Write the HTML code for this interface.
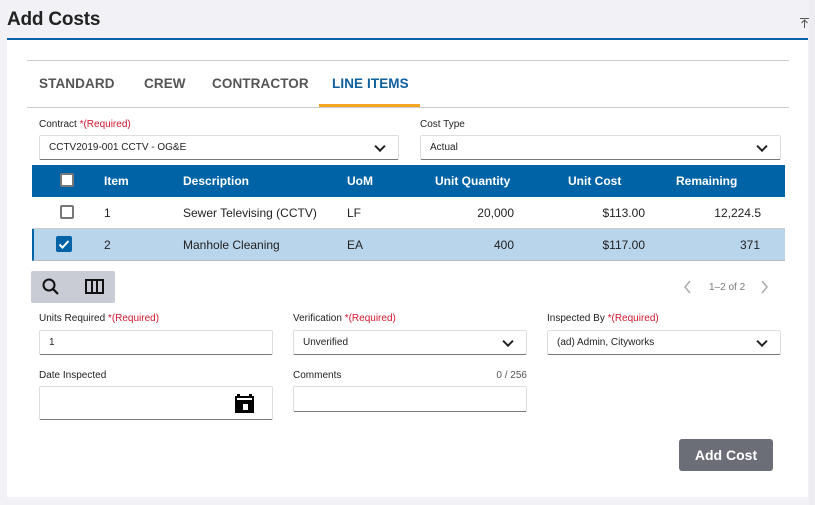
<!DOCTYPE html>
<html><head><style>
*{box-sizing:border-box;margin:0;padding:0}
body{width:815px;height:505px;background:#f1f1f6;font-family:"Liberation Sans",sans-serif;position:relative;overflow:hidden;color:#222}
.a{position:absolute}
.panel{left:7px;top:38px;width:801px;height:459px;background:#fff;border-top:2px solid #0a62a8}
.tab{top:76px;font-size:13.5px;font-weight:bold;color:#555;letter-spacing:.1px}
.lbl{font-size:10px;color:#222}
.req{color:#d3162d}
.inp{background:#fff;border:1px solid #ddd;border-bottom:1px solid #777;border-radius:2px;font-size:10px;padding-left:9px;display:flex;align-items:center}
.chev{position:absolute;right:14px;top:50%;width:8px;height:8px;border-right:2px solid #222;border-bottom:2px solid #222;transform:translateY(-70%) rotate(45deg)}
.th{top:165px;height:32px;left:32px;width:753px;background:#0063a6}
.h{font-size:12px;font-weight:bold;color:#fff;top:174px}
.c{font-size:12px;color:#222}
.cb{width:14px;height:14px;border:2px solid #777;border-radius:2px;background:#fff}
</style></head><body>
<div class="a" style="left:7px;top:9px;font-size:19px;color:#222;font-weight:bold;letter-spacing:-.2px">Add Costs</div>
<div class="a" style="left:800px;top:18px;width:9px;border-top:1px solid #555"></div>
<svg class="a" style="left:800px;top:19px" width="9" height="10"><path d="M4.5 9V1M1.5 4l3-3 3 3" stroke="#555" stroke-width="1" fill="none"/></svg>
<div class="a" style="left:809px;top:0;width:6px;height:505px;background:#ececf1"></div>
<div class="a panel"></div>
<div class="a" style="left:27px;top:60px;width:762px;border-top:1px solid #ccc"></div>
<div class="a" style="left:27px;top:107px;width:762px;border-top:1px solid #ccc"></div>
<div class="a tab" style="left:39px">STANDARD</div>
<div class="a tab" style="left:144px">CREW</div>
<div class="a tab" style="left:212px">CONTRACTOR</div>
<div class="a tab" style="left:332px;color:#0d5f9e">LINE ITEMS</div>
<div class="a" style="left:319px;top:104px;width:101px;height:3px;background:#f5a623"></div>

<div class="a lbl" style="left:39px;top:119px">Contract <span class="req">*(Required)</span></div>
<div class="a inp" style="left:39px;top:135px;width:360px;height:25px">CCTV2019-001 CCTV - OG&amp;E<span class="chev"></span></div>
<div class="a lbl" style="left:420px;top:119px">Cost Type</div>
<div class="a inp" style="left:420px;top:135px;width:361px;height:25px">Actual<span class="chev"></span></div>

<div class="a th"></div>
<div class="a cb" style="left:60px;top:173px"></div>
<div class="a h" style="left:104px">Item</div>
<div class="a h" style="left:183px">Description</div>
<div class="a h" style="left:347px">UoM</div>
<div class="a h" style="left:435px">Unit Quantity</div>
<div class="a h" style="left:568px">Unit Cost</div>
<div class="a h" style="left:676px">Remaining</div>

<div class="a" style="left:32px;top:228px;width:753px;border-top:1px solid #ccc"></div>
<div class="a cb" style="left:60px;top:205px"></div>
<div class="a c" style="left:104px;top:206px">1</div>
<div class="a c" style="left:183px;top:206px">Sewer Televising (CCTV)</div>
<div class="a c" style="left:347px;top:206px">LF</div>
<div class="a c" style="left:400px;top:206px;width:114px;text-align:right">20,000</div>
<div class="a c" style="left:520px;top:206px;width:125px;text-align:right">$113.00</div>
<div class="a c" style="left:650px;top:206px;width:111px;text-align:right">12,224.5</div>

<div class="a" style="left:32px;top:229px;width:753px;height:32px;background:#b9d5ec;border-left:2px solid #0063a6;border-bottom:1px solid #bbb"></div>
<div class="a" style="left:56px;top:236px;width:16px;height:16px;background:#0063a6;border-radius:2px"><svg width="16" height="16"><path d="M3.5 8.5l3 3 6-6.5" stroke="#fff" stroke-width="2" fill="none"/></svg></div>
<div class="a c" style="left:104px;top:238px">2</div>
<div class="a c" style="left:183px;top:238px">Manhole Cleaning</div>
<div class="a c" style="left:347px;top:238px">EA</div>
<div class="a c" style="left:400px;top:238px;width:114px;text-align:right">400</div>
<div class="a c" style="left:520px;top:238px;width:125px;text-align:right">$117.00</div>
<div class="a c" style="left:650px;top:238px;width:110px;text-align:right">371</div>

<div class="a" style="left:31px;top:271px;width:84px;height:32px;background:#c9ccd5;border-radius:2px"></div>
<svg class="a" style="left:41px;top:277px" width="20" height="20"><circle cx="8" cy="8" r="5.5" stroke="#111" stroke-width="2" fill="none"/><path d="M12 12l5 5" stroke="#111" stroke-width="2.2"/></svg>
<svg class="a" style="left:85px;top:279px" width="20" height="16"><rect x="1" y="1" width="17" height="13" stroke="#111" stroke-width="2" fill="none"/><path d="M7 1v13M12 1v13" stroke="#111" stroke-width="2"/></svg>
<svg class="a" style="left:683px;top:280px" width="10" height="14"><path d="M7 1L2 7l5 6" stroke="#aaa" stroke-width="1.5" fill="none"/></svg>
<div class="a" style="left:709px;top:282px;font-size:10px;color:#777">1–2 of 2</div>
<svg class="a" style="left:760px;top:280px" width="10" height="14"><path d="M2 1l5 6-5 6" stroke="#aaa" stroke-width="1.5" fill="none"/></svg>

<div class="a lbl" style="left:39px;top:313px">Units Required <span class="req">*(Required)</span></div>
<div class="a inp" style="left:39px;top:330px;width:234px;height:25px">1</div>
<div class="a lbl" style="left:293px;top:313px">Verification <span class="req">*(Required)</span></div>
<div class="a inp" style="left:293px;top:330px;width:234px;height:25px">Unverified<span class="chev"></span></div>
<div class="a lbl" style="left:547px;top:313px">Inspected By <span class="req">*(Required)</span></div>
<div class="a inp" style="left:547px;top:330px;width:234px;height:25px">(ad) Admin, Cityworks<span class="chev"></span></div>

<div class="a lbl" style="left:39px;top:370px">Date Inspected</div>
<div class="a inp" style="left:39px;top:386px;width:234px;height:34px"></div>
<svg class="a" style="left:234px;top:393px" width="21" height="21"><rect x="1" y="3" width="19" height="17" fill="#000"/><rect x="3" y="1" width="3" height="4" fill="#000"/><rect x="15" y="1" width="3" height="4" fill="#000"/><rect x="3" y="5" width="15" height="2" fill="#fff"/><rect x="9" y="11" width="5" height="6" fill="#fff"/></svg>
<div class="a lbl" style="left:293px;top:370px">Comments</div>
<div class="a lbl" style="left:480px;top:370px;width:47px;text-align:right;color:#555">0 / 256</div>
<div class="a inp" style="left:293px;top:386px;width:234px;height:26px"></div>

<div class="a" style="left:679px;top:439px;width:94px;height:32px;background:#6b6e76;border-radius:3px;color:#fff;font-size:14px;font-weight:bold;display:flex;align-items:center;justify-content:center">Add Cost</div>
</body></html>
